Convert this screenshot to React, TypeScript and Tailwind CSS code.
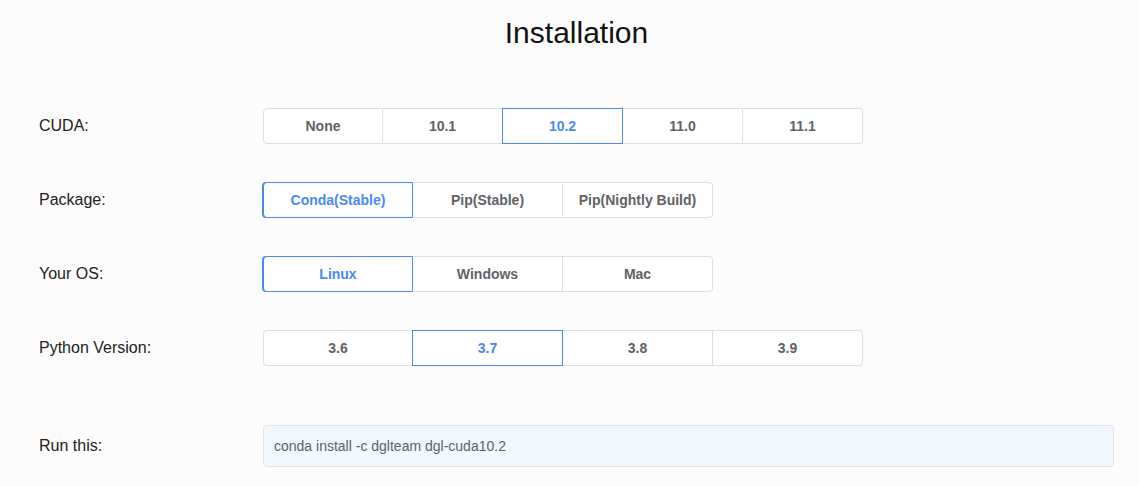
import { useState } from 'react';

type Row = {
  label: string;
  options: string[];
  width: string;
};

const rows: Row[] = [
  { label: 'CUDA:', options: ['None', '10.1', '10.2', '11.0', '11.1'], width: 'w-[120px]' },
  { label: 'Package:', options: ['Conda(Stable)', 'Pip(Stable)', 'Pip(Nightly Build)'], width: 'w-[150px]' },
  { label: 'Your OS:', options: ['Linux', 'Windows', 'Mac'], width: 'w-[150px]' },
  { label: 'Python Version:', options: ['3.6', '3.7', '3.8', '3.9'], width: 'w-[150px]' },
];

function RadioGroup({ row, value, onChange }: { row: Row; value: string; onChange: (v: string) => void }) {
  return (
    <div className="flex">
      {row.options.map((opt, i) => {
        const active = opt === value;
        const first = i === 0;
        const last = i === row.options.length - 1;
        return (
          <button
            key={opt}
            onClick={() => onChange(opt)}
            className={`${row.width} h-[36px] border-y border-r bg-white text-[14px] font-bold
              ${first ? 'border-l rounded-l-[4px]' : ''}
              ${last ? 'rounded-r-[4px]' : ''}
              ${active ? 'border-[#4a89f3] text-[#4a89f3] shadow-[-1px_0_0_0_#4a89f3] relative z-10' : 'border-[#dcdfe6] text-[#606266]'}`}
          >
            {opt}
          </button>
        );
      })}
    </div>
  );
}

export default function App() {
  const [values, setValues] = useState<Record<string, string>>({
    'CUDA:': '10.2',
    'Package:': 'Conda(Stable)',
    'Your OS:': 'Linux',
    'Python Version:': '3.7',
  });

  const cuda = values['CUDA:'] === 'None' ? 'cpu' : 'cuda' + values['CUDA:'];
  const command = `conda install -c dglteam dgl-${cuda}`;

  return (
    <div className="min-h-screen bg-[#fcfcfc] font-['Liberation_Sans',Arial,sans-serif]">
      <h1 className="pt-[9px] pl-[14px] text-center text-[30px] leading-[48px] text-[#111]">Installation</h1>

      <div className="mt-[51px] flex flex-col gap-[38px] pl-[39px] pr-[38px]">
        {rows.map(row => (
          <div key={row.label} className="flex items-center">
            <div className="w-[224px] text-[16px] text-[#222]">{row.label}</div>
            <RadioGroup
              row={row}
              value={values[row.label]}
              onChange={v => setValues({ ...values, [row.label]: v })}
            />
          </div>
        ))}
      </div>

      <div className="mt-[59px] flex items-center pl-[39px] pr-[25px]">
        <div className="w-[224px] text-[16px] text-[#222]">Run this:</div>
        <div className="flex h-[42px] flex-1 items-center rounded-[4px] border border-[#dfe4ea] bg-[#f1f8fe] px-[10px] text-[14px] text-[#606266]">
          {command}
        </div>
      </div>
    </div>
  );
}
